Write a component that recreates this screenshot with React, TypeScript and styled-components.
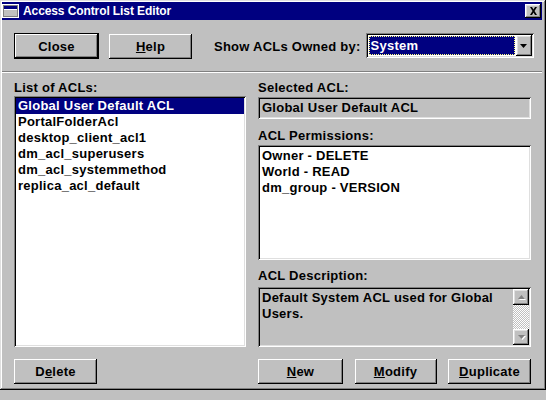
import styled, { createGlobalStyle } from 'styled-components';

const GlobalStyle = createGlobalStyle`
  html, body {
    margin: 0;
    padding: 0;
    background: #c0c0c0;
  }
  * {
    box-sizing: border-box;
  }
`;

const acls = [
  'Global User Default ACL',
  'PortalFolderAcl',
  'desktop_client_acl1',
  'dm_acl_superusers',
  'dm_acl_systemmethod',
  'replica_acl_default',
];

const permissions = ['Owner - DELETE', 'World - READ', 'dm_group - VERSION'];

const raised = `
  box-shadow: inset -1px -1px #000, inset 1px 1px #fff, inset -2px -2px #808080, inset 2px 2px #dfdfdf;
`;

const sunken = `
  box-shadow: inset 1px 1px #808080, inset -1px -1px #fff, inset 2px 2px #000, inset -2px -2px #dfdfdf;
`;

const Window = styled.div`
  width: 546px;
  height: 390px;
  padding: 2px 4px 0 2px;
  background: #c0c0c0;
  box-shadow: inset -1px -1px #000, inset 1px 1px #dfdfdf, inset -2px -2px #808080, inset 2px 2px #fff;
  font-family: 'Liberation Sans', Arial, sans-serif;
  font-weight: bold;
  font-size: 13px;
  letter-spacing: 0.25px;
  color: #000;
  display: flex;
  flex-direction: column;
`;

const TitleBar = styled.div`
  height: 18px;
  background: #000080;
  color: #fff;
  display: flex;
  align-items: center;
  padding: 0 1px 0 0;
`;

const TitleText = styled.span`
  flex: 1;
  margin-left: 4px;
  font-size: 12px;
  letter-spacing: -0.1px;
  line-height: 18px;
`;

const TitleButton = styled.div`
  width: 16px;
  height: 14px;
  background: #c0c0c0;
  ${raised}
  display: flex;
  align-items: center;
  justify-content: center;
`;

const TopBar = styled.div`
  display: flex;
  align-items: center;
  padding: 13px 0 12px 12px;
`;

const Button = styled.div<{ $width: number; $default?: boolean }>`
  width: ${({ $width }) => $width}px;
  height: ${({ $default }) => ($default ? 26 : 25)}px;
  background: #c0c0c0;
  display: flex;
  align-items: center;
  justify-content: center;
  box-shadow: inset -1px -1px #000, inset 1px 1px #fff, inset -2px -2px #808080;
  border: ${({ $default }) => ($default ? '1px solid #000' : 'none')};
`;

const TopLabel = styled.span`
  margin: 0 5px 0 22px;
`;

const Combo = styled.div`
  width: 168px;
  height: 25px;
  padding: 2px;
  background: #fff;
  ${sunken}
  display: flex;
  margin-top: -1px;
`;

const ComboValue = styled.div`
  flex: 1;
  margin: 1px;
  padding-left: 2px;
  background: #000080;
  color: #fff;
  outline: 1px dotted #ffff80;
  outline-offset: -1px;
  line-height: 19px;
`;

const ComboArrow = styled.div`
  width: 16px;
  background: #c0c0c0;
  ${raised}
  display: flex;
  align-items: center;
  justify-content: center;
`;

const Separator = styled.div`
  height: 2px;
  border-top: 1px solid #808080;
  border-bottom: 1px solid #fff;
`;

const Body = styled.div`
  display: grid;
  grid-template-columns: 232px 273px;
  column-gap: 12px;
  row-gap: 12px;
  padding: 7px 0 0 12px;
`;

const Column = styled.div`
  display: flex;
  flex-direction: column;
`;

const Label = styled.div<{ $gap?: number }>`
  line-height: 15px;
  margin-top: ${({ $gap }) => $gap ?? 0}px;
`;

const ListBox = styled.div<{ $height: number; $gap: number; $grey?: boolean }>`
  height: ${({ $height }) => $height}px;
  margin-top: ${({ $gap }) => $gap}px;
  padding: 2px;
  background: ${({ $grey }) => ($grey ? '#c0c0c0' : '#fff')};
  ${sunken}
  display: flex;
  flex-direction: column;
`;

const ListItem = styled.div<{ $selected?: boolean; $offset?: number }>`
  height: 16px;
  line-height: 16px;
  padding-left: 2px;
  margin-top: ${({ $offset }) => $offset ?? 0}px;
  white-space: nowrap;
  background: ${({ $selected }) => ($selected ? '#000080' : 'transparent')};
  color: ${({ $selected }) => ($selected ? '#fff' : '#000')};
`;

const TextField = styled.div`
  height: 22px;
  margin-top: 2px;
  padding: 2px 4px;
  line-height: 18px;
  background: #c0c0c0;
  ${sunken}
`;

const TextArea = styled.div`
  flex: 1;
  display: flex;
`;

const TextBody = styled.div`
  flex: 1;
  padding: 1px 2px;
  line-height: 16px;
`;

const ScrollBar = styled.div`
  width: 16px;
  display: flex;
  flex-direction: column;
`;

const ScrollButton = styled.div`
  height: 16px;
  background: #c0c0c0;
  ${raised}
  display: flex;
  align-items: center;
  justify-content: center;
`;

const ScrollTrack = styled.div`
  flex: 1;
  background: repeating-conic-gradient(#c0c0c0 0 25%, #fff 0 50%) 0 0 / 2px 2px;
`;

const ButtonRow = styled.div`
  display: flex;
  justify-content: space-between;
`;

const TitleIcon = () => (
  <svg width="17" height="14" viewBox="0 0 17 14">
    <rect x="0" y="0" width="17" height="14" fill="#c0c0c0" />
    <rect x="0.5" y="0.5" width="16" height="13" fill="none" stroke="#fff" />
    <rect x="1.5" y="1.5" width="14" height="11" fill="none" stroke="#808080" />
    <rect x="2" y="2" width="13" height="3" fill="#000080" />
    <rect x="2" y="5" width="13" height="1" fill="#fff" />
  </svg>
);

const CloseIcon = () => (
  <svg width="9" height="8" viewBox="0 0 9 8">
    <path d="M1 0h2l1.5 2.5L6 0h2L5.5 4 8 8H6L4.5 5.5 3 8H1l2.5-4z" fill="#000" />
  </svg>
);

const DownArrow = ({ color = '#000', shadow }: { color?: string; shadow?: boolean }) => (
  <svg width="9" height="6" viewBox="0 0 9 6">
    {shadow && <path d="M2 2h7L5.5 6z" fill="#fff" />}
    <path d="M1 1h7L4.5 5z" fill={color} />
  </svg>
);

const UpArrow = () => (
  <svg width="9" height="6" viewBox="0 0 9 6">
    <path d="M2 6h7L5.5 2z" fill="#fff" />
    <path d="M1 5h7L4.5 1z" fill="#808080" />
  </svg>
);

export default function App() {
  return (
    <>
      <GlobalStyle />
      <Window>
        <TitleBar>
          <TitleIcon />
          <TitleText>Access Control List Editor</TitleText>
          <TitleButton>
            <CloseIcon />
          </TitleButton>
        </TitleBar>

        <TopBar>
          <Button $width={85} $default>
            Close
          </Button>
          <Button $width={83} style={{ marginLeft: 10 }}>
            <span>
              <u>H</u>elp
            </span>
          </Button>
          <TopLabel>Show ACLs Owned by:</TopLabel>
          <Combo>
            <ComboValue>System</ComboValue>
            <ComboArrow>
              <DownArrow />
            </ComboArrow>
          </Combo>
        </TopBar>

        <Separator />

        <Body>
          <Column>
            <Label>List of ACLs:</Label>
            <ListBox $height={251} $gap={1}>
              {acls.map((acl, i) => (
                <ListItem key={acl} $selected={i === 0}>
                  {acl}
                </ListItem>
              ))}
            </ListBox>
          </Column>

          <Column>
            <Label>Selected ACL:</Label>
            <TextField>Global User Default ACL</TextField>
            <Label $gap={9}>ACL Permissions:</Label>
            <ListBox $height={115} $gap={2}>
              {permissions.map((p, i) => (
                <ListItem key={p} $offset={i === 0 ? 1 : 0}>
                  {p}
                </ListItem>
              ))}
            </ListBox>
            <Label $gap={8}>ACL Description:</Label>
            <ListBox $height={60} $gap={4} $grey>
              <TextArea>
                <TextBody>Default System ACL used for Global Users.</TextBody>
                <ScrollBar>
                  <ScrollButton>
                    <UpArrow />
                  </ScrollButton>
                  <ScrollTrack />
                  <ScrollButton>
                    <DownArrow color="#808080" shadow />
                  </ScrollButton>
                </ScrollBar>
              </TextArea>
            </ListBox>
          </Column>

          <div>
            <Button $width={83}>
              <span>
                D<u>e</u>lete
              </span>
            </Button>
          </div>
          <ButtonRow>
            <Button $width={85}>
              <span>
                <u>N</u>ew
              </span>
            </Button>
            <Button $width={82}>
              <span>
                <u>M</u>odify
              </span>
            </Button>
            <Button $width={83}>
              <span>
                <u>D</u>uplicate
              </span>
            </Button>
          </ButtonRow>
        </Body>
      </Window>
    </>
  );
}
